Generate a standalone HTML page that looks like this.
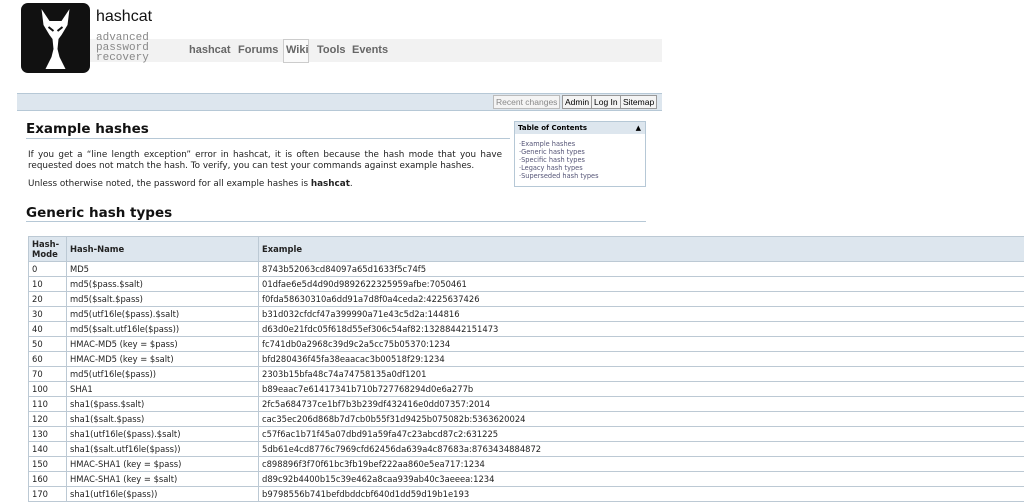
<!DOCTYPE html>
<html><head><style>
body{margin:0;background:#fff;font-family:"DejaVu Sans",Verdana,sans-serif;width:1024px;height:501px;overflow:hidden;position:relative}
.abs{position:absolute}
.logo{left:21px;top:3px;width:69px;height:70px;background:#111;border-radius:7px}
.navbar{left:90px;top:39px;width:572px;height:23px;background:#f2f2f2}
.nav{top:44px;font-family:"Liberation Sans",Arial,sans-serif;font-weight:bold;font-size:11px;color:#666}
.bar{left:17px;top:93px;width:645px;height:16px;background:#dde6ee;border-top:1px solid #b6c8d6;border-bottom:1px solid #b6c8d6}
.btn{top:95px;height:12px;border:1px solid #999;background:#f4f4f4;font-family:"Liberation Sans",Arial,sans-serif;font-size:8.5px;line-height:12px;padding:0 2px;color:#000}
h1{position:absolute;margin:0;font-size:13.5px;font-weight:bold;color:#111}
.p{font-size:8.8px;color:#222;line-height:11px}
table{position:absolute;left:28px;top:236px;border-collapse:collapse;font-size:8.4px;color:#222;table-layout:fixed;width:1030px}
td,th{border:1px solid #bcc9d4;padding:0 3px;height:14px;text-align:left;white-space:nowrap;overflow:hidden}
th{background:#dde6ee;height:24px;font-weight:bold;line-height:10px}
</style></head><body>
<div class="abs navbar"></div>
<div class="abs logo"><svg width="69" height="70" viewBox="0 0 68 70"><path d="M20 6 L28 18 L40 18 L48 6 L46 22 L40 32 L37 36 L36 46 L38 54 L42 62 L44 66 L24 66 L26 62 L30 54 L32 46 L31 36 L28 32 L22 22 Z" fill="#fff"/><path d="M27 24 L32 28 M41 24 L36 28" stroke="#111" stroke-width="2"/></svg></div>
<div class="abs" style="left:96px;top:8px;font-family:'Liberation Sans',Arial,sans-serif;font-size:16px;color:#111">hashcat</div>
<div class="abs" style="left:96px;top:33px;font-family:'Liberation Mono',monospace;font-size:11px;line-height:10px;color:#888">advanced<br>password<br>recovery</div>
<div class="abs nav" style="left:189px">hashcat</div>
<div class="abs nav" style="left:238px">Forums</div>
<div class="abs" style="left:283px;top:39px;width:24px;height:22px;border:1px solid #ccc;background:#fafafa"></div>
<div class="abs nav" style="left:286px">Wiki</div>
<div class="abs nav" style="left:317px">Tools</div>
<div class="abs nav" style="left:352px">Events</div>
<div class="abs bar"></div>
<div class="abs btn" style="left:493px;color:#888;border-color:#bbb">Recent changes</div>
<div class="abs btn" style="left:562px">Admin</div>
<div class="abs btn" style="left:591px">Log In</div>
<div class="abs btn" style="left:620px">Sitemap</div>
<h1 style="left:26px;top:121px">Example hashes</h1>
<div class="abs" style="left:26px;top:138px;width:484px;border-top:1px solid #b6c8d6"></div>
<div class="abs p" style="left:28px;top:150px;width:474px;text-align:justify">If you get a “line length exception” error in hashcat, it is often because the hash mode that you have requested does not match the hash. To verify, you can test your commands against example hashes.</div>
<div class="abs p" style="left:28px;top:179px">Unless otherwise noted, the password for all example hashes is <b>hashcat</b>.</div>
<div class="abs" style="left:514px;top:121px;width:130px;height:64px;border:1px solid #b6c8d6"></div>
<div class="abs" style="left:515px;top:122px;width:130px;height:12px;background:#dde6ee;font-size:7px;font-weight:bold;line-height:12px;padding-left:3px;box-sizing:border-box">Table of Contents<span style="float:right;margin-right:4px">▲</span></div>
<div class="abs" style="left:519px;top:140px;font-size:6.6px;line-height:8px;color:#557">·Example hashes<br>·Generic hash types<br>·Specific hash types<br>·Legacy hash types<br>·Superseded hash types</div>
<h1 style="left:26px;top:205px">Generic hash types</h1>
<div class="abs" style="left:26px;top:221px;width:620px;border-top:1px solid #b6c8d6"></div>
<table>
<colgroup><col style="width:38px"><col style="width:192px"><col style="width:800px"></colgroup>
<tr><th>Hash-<br>Mode</th><th>Hash-Name</th><th>Example</th></tr>
<tr><td>0</td><td>MD5</td><td>8743b52063cd84097a65d1633f5c74f5</td></tr>
<tr><td>10</td><td>md5($pass.$salt)</td><td>01dfae6e5d4d90d9892622325959afbe:7050461</td></tr>
<tr><td>20</td><td>md5($salt.$pass)</td><td>f0fda58630310a6dd91a7d8f0a4ceda2:4225637426</td></tr>
<tr><td>30</td><td>md5(utf16le($pass).$salt)</td><td>b31d032cfdcf47a399990a71e43c5d2a:144816</td></tr>
<tr><td>40</td><td>md5($salt.utf16le($pass))</td><td>d63d0e21fdc05f618d55ef306c54af82:13288442151473</td></tr>
<tr><td>50</td><td>HMAC-MD5 (key = $pass)</td><td>fc741db0a2968c39d9c2a5cc75b05370:1234</td></tr>
<tr><td>60</td><td>HMAC-MD5 (key = $salt)</td><td>bfd280436f45fa38eaacac3b00518f29:1234</td></tr>
<tr><td>70</td><td>md5(utf16le($pass))</td><td>2303b15bfa48c74a74758135a0df1201</td></tr>
<tr><td>100</td><td>SHA1</td><td>b89eaac7e61417341b710b727768294d0e6a277b</td></tr>
<tr><td>110</td><td>sha1($pass.$salt)</td><td>2fc5a684737ce1bf7b3b239df432416e0dd07357:2014</td></tr>
<tr><td>120</td><td>sha1($salt.$pass)</td><td>cac35ec206d868b7d7cb0b55f31d9425b075082b:5363620024</td></tr>
<tr><td>130</td><td>sha1(utf16le($pass).$salt)</td><td>c57f6ac1b71f45a07dbd91a59fa47c23abcd87c2:631225</td></tr>
<tr><td>140</td><td>sha1($salt.utf16le($pass))</td><td>5db61e4cd8776c7969cfd62456da639a4c87683a:8763434884872</td></tr>
<tr><td>150</td><td>HMAC-SHA1 (key = $pass)</td><td>c898896f3f70f61bc3fb19bef222aa860e5ea717:1234</td></tr>
<tr><td>160</td><td>HMAC-SHA1 (key = $salt)</td><td>d89c92b4400b15c39e462a8caa939ab40c3aeeea:1234</td></tr>
<tr><td>170</td><td>sha1(utf16le($pass))</td><td>b9798556b741befdbddcbf640d1dd59d19b1e193</td></tr>
</table>
</body></html>
